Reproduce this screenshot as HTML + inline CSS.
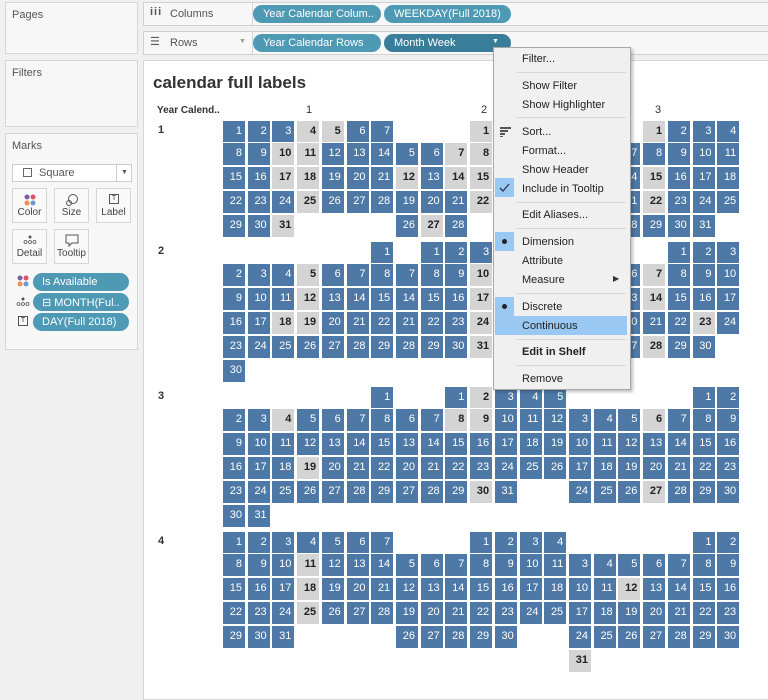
<!DOCTYPE html>
<html><head><meta charset="utf-8">
<style>
*{box-sizing:border-box;margin:0;padding:0}
body{width:768px;height:689px;overflow:hidden;background:#f0f0f0;font-family:"Liberation Sans",sans-serif;font-size:11px;color:#333;position:relative}
.abs{position:absolute}
.panel{position:absolute;background:#f7f7f7;border:1px solid #d6d6d6}
.ptitle{position:absolute;left:6px;top:6px;color:#555;font-size:11px}
.shelf{position:absolute;left:143px;right:-2px;background:#f7f7f7;border:1px solid #d0d0d0;height:24px}
.shelf .lab{position:absolute;left:0;top:0;width:109px;height:22px;border-right:1px solid #d6d6d6;color:#555;padding:5px 0 0 26px}
.pill{position:absolute;height:18px;border-radius:9px;background:#4e9ab4;color:#fff;font-size:11px;padding:3px 0 0 10px;white-space:nowrap;overflow:hidden}
.card{position:absolute;width:35px;height:35px;background:#f9f9f9;border:1px solid #d6d6d6;text-align:center;font-size:10px;color:#444}
.card span{position:absolute;left:0;right:0;bottom:4px}
.view{position:absolute;left:143px;top:60px;width:630px;height:640px;background:#fff;border:1px solid #d6d6d6}
.c{position:absolute;width:22px;height:22px;background:#4e79a7;color:#fff;text-align:right;padding:4px 3px 0 0;font-size:11px}
.c.g{background:#d4d4d4;color:#222;font-weight:bold}
.menu{position:absolute;left:493px;top:47px;width:138px;height:343px;background:#f0f0f0;border:1px solid #a8a8a8;box-shadow:2px 2px 3px rgba(0,0,0,.25);z-index:10}
.mi{position:absolute;left:28px;font-size:11px;color:#222}
.sep{position:absolute;left:22px;right:4px;height:1px;background:#d8d8d8}
.ic{position:absolute;left:1px;width:19px;height:19px;background:#99c9f2}
</style></head><body>

<div class="panel" style="left:5px;top:2px;width:133px;height:52px"><div class="ptitle">Pages</div></div>
<div class="panel" style="left:5px;top:60px;width:133px;height:67px"><div class="ptitle">Filters</div></div>
<div class="panel" style="left:5px;top:133px;width:133px;height:217px"><div class="ptitle">Marks</div>
  <div class="abs" style="left:6px;top:30px;width:120px;height:18px;background:#fff;border:1px solid #ccc;color:#555;padding:2px 0 0 26px">Square
    <div class="abs" style="left:10px;top:3px;width:9px;height:9px;border:1px solid #666"></div>
    <div class="abs" style="right:0;top:0;width:15px;height:16px;border-left:1px solid #ccc;font-size:7px;padding:4px 0 0 4px">▼</div></div>
  <div class="card" style="left:6px;top:54px"><svg class="abs" style="left:11px;top:5px" width="12" height="12"><circle cx="3" cy="3" r="2.5" fill="#7b5fa0"/><circle cx="9" cy="3" r="2.5" fill="#e05060"/><circle cx="3" cy="9" r="2.5" fill="#f09050"/><circle cx="9" cy="9" r="2.5" fill="#6a9ad0"/></svg><span>Color</span></div>
  <div class="card" style="left:48px;top:54px"><svg class="abs" style="left:10px;top:4px" width="14" height="14"><circle cx="8" cy="6" r="4.5" fill="none" stroke="#555"/><circle cx="4" cy="10" r="2.5" fill="none" stroke="#555"/></svg><span>Size</span></div>
  <div class="card" style="left:90px;top:54px"><div class="abs" style="left:12px;top:5px;width:10px;height:10px;border:1px solid #555;font-size:7px;line-height:8px">T</div><span>Label</span></div>
  <div class="card" style="left:6px;top:95px"><svg class="abs" style="left:10px;top:5px" width="14" height="10"><circle cx="7" cy="2" r="1.5" fill="#555"/><circle cx="2.5" cy="7" r="1.5" fill="none" stroke="#555" stroke-width=".8"/><circle cx="7" cy="7" r="1.5" fill="none" stroke="#555" stroke-width=".8"/><circle cx="11.5" cy="7" r="1.5" fill="none" stroke="#555" stroke-width=".8"/></svg><span>Detail</span></div>
  <div class="card" style="left:48px;top:95px"><svg class="abs" style="left:10px;top:4px" width="14" height="13"><path d="M1 1h12v8H7l-3 3V9H1z" fill="none" stroke="#555"/></svg><span>Tooltip</span></div>
  <svg class="abs" style="left:11px;top:141px" width="12" height="12"><circle cx="3" cy="3" r="2.5" fill="#7b5fa0"/><circle cx="9" cy="3" r="2.5" fill="#e05060"/><circle cx="3" cy="9" r="2.5" fill="#f09050"/><circle cx="9" cy="9" r="2.5" fill="#6a9ad0"/></svg>
  <div class="pill" style="left:27px;top:139px;width:96px;padding-left:9px">Is Available</div>
  <svg class="abs" style="left:10px;top:163px" width="14" height="10"><circle cx="7" cy="2" r="1.5" fill="#555"/><circle cx="2.5" cy="7" r="1.5" fill="none" stroke="#555" stroke-width=".8"/><circle cx="7" cy="7" r="1.5" fill="none" stroke="#555" stroke-width=".8"/><circle cx="11.5" cy="7" r="1.5" fill="none" stroke="#555" stroke-width=".8"/></svg>
  <div class="pill" style="left:27px;top:159px;width:96px;padding-left:9px">⊟ MONTH(Ful..</div>
  <div class="abs" style="left:12px;top:182px;width:10px;height:10px;border:1px solid #555;font-size:7px;line-height:8px;text-align:center">T</div>
  <div class="pill" style="left:27px;top:179px;width:96px;padding-left:9px">DAY(Full 2018)</div>
</div>

<div class="shelf" style="top:2px"><div class="lab"><span class="abs" style="left:6px;top:3px;font-weight:bold;letter-spacing:1px">iii</span>Columns</div>
  <div class="pill" style="left:109px;top:2px;width:128px">Year Calendar Colum..</div>
  <div class="pill" style="left:240px;top:2px;width:127px">WEEKDAY(Full 2018)</div></div>
<div class="shelf" style="top:31px"><div class="lab"><span class="abs" style="left:6px;top:3px">☰</span>Rows<span class="abs" style="left:95px;top:6px;font-size:7px;color:#999">▼</span></div>
  <div class="pill" style="left:109px;top:2px;width:128px">Year Calendar Rows</div>
  <div class="pill" style="left:240px;top:2px;width:127px;background:#387d99">Month Week<span class="abs" style="left:108px;top:4px;font-size:7px">▼</span></div></div>

<div class="view">
  <div class="abs" style="left:9px;top:12px;font-size:17px;font-weight:bold;color:#333">calendar full labels</div>
  <div class="abs" style="left:13px;top:44px;font-size:10px;font-weight:bold">Year Calend..</div>
  <div class="abs" style="left:162px;top:43px">1</div>
  <div class="abs" style="left:337px;top:43px">2</div>
  <div class="abs" style="left:511px;top:43px">3</div>
  <div class="abs" style="left:14px;top:63px;font-weight:bold">1</div>
  <div class="abs" style="left:14px;top:184px;font-weight:bold">2</div>
  <div class="abs" style="left:14px;top:329px;font-weight:bold">3</div>
  <div class="abs" style="left:14px;top:474px;font-weight:bold">4</div>
</div>
<div id="cal"></div>

<div class="menu">
  <div class="mi" style="top:5px">Filter...</div>
  <div class="sep" style="top:24px"></div>
  <div class="mi" style="top:32px">Show Filter</div>
  <div class="mi" style="top:51px">Show Highlighter</div>
  <div class="sep" style="top:69px"></div>
  <svg class="abs" style="left:6px;top:79px" width="12" height="10"><path d="M0 1h11M0 4h8M0 7h5M0 10h3" stroke="#555" stroke-width="2"/></svg>
  <div class="mi" style="top:78px">Sort...</div>
  <div class="mi" style="top:97px">Format...</div>
  <div class="mi" style="top:116px">Show Header</div>
  <div class="ic" style="top:130px"><svg width="19" height="19"><path d="M5 10l3 3 6-7" fill="none" stroke="#335" stroke-width="1.3"/></svg></div>
  <div class="mi" style="top:135px">Include in Tooltip</div>
  <div class="sep" style="top:154px"></div>
  <div class="mi" style="top:161px">Edit Aliases...</div>
  <div class="sep" style="top:180px"></div>
  <div class="ic" style="top:184px"><div class="abs" style="left:7px;top:7px;width:5px;height:5px;border-radius:3px;background:#222"></div></div>
  <div class="mi" style="top:188px">Dimension</div>
  <div class="mi" style="top:207px">Attribute</div>
  <div class="mi" style="top:226px">Measure</div>
  <div class="abs" style="left:119px;top:226px;font-size:8px">▶</div>
  <div class="sep" style="top:245px"></div>
  <div class="ic" style="top:249px"><div class="abs" style="left:7px;top:7px;width:5px;height:5px;border-radius:3px;background:#222"></div></div>
  <div class="mi" style="top:253px">Discrete</div>
  <div class="abs" style="left:1px;top:268px;width:132px;height:19px;background:#99c9f2"></div>
  <div class="mi" style="top:272px">Continuous</div>
  <div class="sep" style="top:291px"></div>
  <div class="mi" style="top:298px;font-weight:bold">Edit in Shelf</div>
  <div class="sep" style="top:317px"></div>
  <div class="mi" style="top:325px">Remove</div>
</div>

<script>
var first=[0,3,3,6,1,4,6,2,5,0,3,5],days=[31,28,31,30,31,30,31,31,30,31,30,31];
var qt=[121,242,387,532],ro=[0,22,46,70,94,118];
var grey={0:[4,5,10,11,17,18,25,31],1:[1,7,8,12,14,15,22,27],2:[1,15,22],3:[5,12,18,19],4:[10,17,24,31],5:[7,14,23,28],6:[4,19],7:[2,8,9,30],8:[6,27],9:[11,18,25],10:[],11:[12,31]};
var h='';
for(var m=0;m<12;m++){var q=Math.floor(m/3),mm=m%3;
 for(var d=1;d<=days[m];d++){var p=first[m]+d-1,r=Math.floor(p/7),c=p%7;
  var x=223+mm*173+c*24.7,y=qt[q]+ro[r];var hh=r==0?21:22;
  h+='<div class="c'+(grey[m].indexOf(d)>=0?' g':'')+'" style="left:'+x.toFixed(1)+'px;top:'+y+'px;height:'+hh+'px">'+d+'</div>';}}
document.getElementById('cal').innerHTML=h;
</script>
</body></html>
